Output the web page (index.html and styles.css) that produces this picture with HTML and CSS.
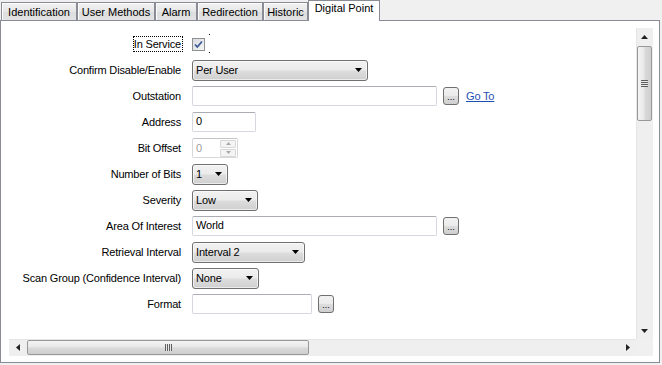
FILE: index.html
```html
<!DOCTYPE html>
<html>
<head>
<meta charset="utf-8">
<link rel="stylesheet" href="styles.css">
</head>
<body>
<div class="window">
  <div class="tabs">
    <div class="tab t1">Identification</div>
    <div class="tab t2">User Methods</div>
    <div class="tab t3">Alarm</div>
    <div class="tab t4">Redirection</div>
    <div class="tab t5">Historic</div>
    <div class="tab sel">Digital Point</div>
  </div>
  <div class="panel">
    <div class="scroller">
      <div class="viewport">
        <div class="form">
          <div class="lbl"><span class="focus">In Service</span></div>
          <div class="ctl"><span class="chkwrap"><span class="check"><svg width="11" height="11" viewBox="0 0 11 11"><path d="M2 5.5 L4.3 8 L9 2.5" fill="none" stroke="#3c5a98" stroke-width="1.8"/></svg></span></span></div>

          <div class="lbl">Confirm Disable/Enable</div>
          <div class="ctl"><div class="combo w-confirm"><span>Per User</span><svg class="arrow" width="7" height="4" viewBox="0 0 7 4"><path d="M0 0h7l-3.5 4z" fill="#000"/></svg></div></div>

          <div class="lbl">Outstation</div>
          <div class="ctl"><div class="text w-long"></div><div class="dots">...</div><span class="link">Go To</span></div>

          <div class="lbl">Address</div>
          <div class="ctl"><div class="text w-addr">0</div></div>

          <div class="lbl">Bit Offset</div>
          <div class="ctl"><div class="spin"><span class="spinval">0</span><span class="spinbtns"><span class="sb"><svg width="5" height="3" viewBox="0 0 5 3"><path d="M0 3h5L2.5 0z" fill="#a8a8a8"/></svg></span><span class="sb"><svg width="5" height="3" viewBox="0 0 5 3"><path d="M0 0h5L2.5 3z" fill="#a8a8a8"/></svg></span></span></div></div>

          <div class="lbl">Number of Bits</div>
          <div class="ctl"><div class="combo w-bits"><span>1</span><svg class="arrow" width="7" height="4" viewBox="0 0 7 4"><path d="M0 0h7l-3.5 4z" fill="#000"/></svg></div></div>

          <div class="lbl">Severity</div>
          <div class="ctl"><div class="combo w-sev"><span>Low</span><svg class="arrow" width="7" height="4" viewBox="0 0 7 4"><path d="M0 0h7l-3.5 4z" fill="#000"/></svg></div></div>

          <div class="lbl">Area Of Interest</div>
          <div class="ctl"><div class="text w-long">World</div><div class="dots">...</div></div>

          <div class="lbl">Retrieval Interval</div>
          <div class="ctl"><div class="combo w-ret"><span>Interval 2</span><svg class="arrow" width="7" height="4" viewBox="0 0 7 4"><path d="M0 0h7l-3.5 4z" fill="#000"/></svg></div></div>

          <div class="lbl">Scan Group (Confidence Interval)</div>
          <div class="ctl"><div class="combo w-scan"><span>None</span><svg class="arrow" width="7" height="4" viewBox="0 0 7 4"><path d="M0 0h7l-3.5 4z" fill="#000"/></svg></div></div>

          <div class="lbl">Format</div>
          <div class="ctl"><div class="text w-fmt"></div><div class="dots">...</div></div>
        </div>
      </div>
      <div class="vscroll">
        <div class="sbtn"><svg width="7" height="4" viewBox="0 0 7 4"><path d="M0 4h7L3.5 0z" fill="#222"/></svg></div>
        <div class="vthumb"><span class="grip-h"></span></div>
        <div class="fill"></div>
        <div class="sbtn"><svg width="7" height="4" viewBox="0 0 7 4"><path d="M0 0h7L3.5 4z" fill="#222"/></svg></div>
      </div>
      <div class="hscroll">
        <div class="sbtn"><svg width="4" height="7" viewBox="0 0 4 7"><path d="M4 0v7L0 3.5z" fill="#222"/></svg></div>
        <div class="hthumb"><span class="grip-v"></span></div>
        <div class="fill"></div>
        <div class="sbtn"><svg width="4" height="7" viewBox="0 0 4 7"><path d="M0 0v7L4 3.5z" fill="#222"/></svg></div>
      </div>
      <div class="corner"></div>
    </div>
  </div>
</div>
</body>
</html>
```
FILE: styles.css
```css
html, body {
  margin: 0;
  padding: 0;
  background: #f0f0f0;
}
body {
  font-family: "Liberation Sans", Arial, sans-serif;
  font-size: 11px;
  color: #000;
}
.window {
  width: 660px;
}
.tabs {
  display: flex;
  align-items: flex-end;
  height: 20px;
  padding-left: 1px;
  position: relative;
  z-index: 1;
}
.tab {
  box-sizing: border-box;
  height: 18px;
  border: 1px solid #898c95;
  border-bottom: none;
  background: linear-gradient(#f3f3f3, #e6e6e6 50%, #dcdcdc 51%, #e3e3e3);
  box-shadow: inset 1px 1px 0 #fcfcfc;
  text-align: center;
  line-height: 16px;
  padding-top: 1px;
  white-space: nowrap;
}
.t1 { width: 76px; }
.t2 { width: 78px; }
.t3 { width: 42px; }
.t4 { width: 66px; }
.t5 { width: 45px; }
.sel {
  width: 72px;
  height: 21px;
  margin-bottom: -1px;
  background: #fff;
  box-shadow: none;
  line-height: 14px;
  padding-top: 0;
}
.panel {
  box-sizing: border-box;
  width: 660px;
  height: 343px;
  border: 1px solid #898c95;
  background: #fff;
  padding: 7px 6px 6px 8px;
}
.scroller {
  display: grid;
  grid-template-columns: 627px 17px;
  grid-template-rows: 311px 17px;
}
.viewport {
  overflow: hidden;
  background: #fff;
}
.form {
  display: grid;
  grid-template-columns: 172px 420px;
  grid-auto-rows: 26px;
  column-gap: 11px;
  align-items: center;
  padding-top: 3px;
  letter-spacing: -0.17px;
}
.lbl {
  text-align: right;
  white-space: nowrap;
}
.focus {
  display: inline-block;
  border: 1px dotted #000;
  padding: 1px 1px 1px 0;
  margin-right: -2px;
  line-height: 12px;
}
.ctl {
  display: flex;
  align-items: center;
}
.chkwrap {
  position: relative;
  display: inline-block;
  height: 13px;
}
.chkwrap::before,
.chkwrap::after {
  content: "";
  position: absolute;
  left: 17px;
  width: 1px;
  height: 1px;
  background: #000;
}
.chkwrap::before { top: -4px; }
.chkwrap::after { top: 14px; }
.check {
  box-sizing: border-box;
  display: flex;
  align-items: center;
  justify-content: center;
  width: 13px;
  height: 13px;
  border: 1px solid #8e8f8f;
  background: linear-gradient(135deg, #d8dbe0, #f6f6f6);
}
.combo {
  box-sizing: border-box;
  height: 21px;
  border: 1px solid #707070;
  border-radius: 3px;
  background: linear-gradient(#f2f2f2, #ebebeb 48%, #dddddd 52%, #cfcfcf);
  display: flex;
  align-items: center;
  justify-content: space-between;
  padding: 0 5px 0 3px;
  box-shadow: inset 0 0 0 1px rgba(255,255,255,0.6);
}
.arrow { flex: none; }
.w-confirm { width: 176px; }
.w-bits { width: 36px; }
.w-sev { width: 66px; }
.w-ret { width: 113px; }
.w-scan { width: 67px; }
.text {
  box-sizing: border-box;
  height: 20px;
  border: 1px solid #d5d8de;
  border-top-color: #abadb3;
  border-radius: 2px;
  background: #fff;
  padding: 0 3px;
  line-height: 17px;
}
.w-long { width: 245px; }
.w-addr { width: 64px; }
.w-fmt { width: 120px; }
.dots {
  box-sizing: border-box;
  width: 16px;
  height: 18px;
  margin-left: 6px;
  border: 1px solid #707070;
  border-radius: 3px;
  background: linear-gradient(#f2f2f2, #ebebeb 48%, #dddddd 52%, #cfcfcf);
  font-size: 9px;
  line-height: 18px;
  text-align: center;
  letter-spacing: 0;
}
.link {
  margin-left: 7px;
  color: #1e4fb4;
  text-decoration: underline;
}
.spin {
  box-sizing: border-box;
  width: 46px;
  height: 20px;
  border: 1px solid #d6d8dc;
  border-top-color: #c2c4c8;
  border-radius: 2px;
  display: flex;
  align-items: center;
  justify-content: space-between;
  padding: 0 1px 0 3px;
}
.spinval { color: #a0a0a0; }
.spinbtns {
  display: flex;
  flex-direction: column;
  gap: 1px;
}
.sb {
  box-sizing: border-box;
  width: 16px;
  height: 8px;
  border: 1px solid #d8d8d8;
  border-radius: 1px;
  background: #f4f4f4;
  display: flex;
  align-items: center;
  justify-content: center;
}
.vscroll {
  display: flex;
  flex-direction: column;
  background: #efefef;
  box-shadow: inset 1px 0 0 #e6e6e6;
}
.hscroll {
  display: flex;
  background: #efefef;
  box-shadow: inset 0 1px 0 #e6e6e6;
}
.corner {
  background: #f0f0f0;
}
.sbtn {
  flex: none;
  width: 17px;
  height: 17px;
  display: flex;
  align-items: center;
  justify-content: center;
}
.fill { flex: 1; }
.vthumb {
  box-sizing: border-box;
  flex: none;
  width: 15px;
  height: 75px;
  margin: 1px 0 0 1px;
  border: 1px solid #989898;
  border-radius: 2px;
  background: linear-gradient(90deg, #f4f4f4, #e8e8e8 45%, #d9d9d9 55%, #cfcfcf);
  display: flex;
  align-items: center;
  justify-content: center;
}
.grip-h {
  width: 7px;
  height: 7px;
  background: repeating-linear-gradient(#5e5e5e 0 1px, #e8e8e8 1px 2px);
}
.hthumb {
  box-sizing: border-box;
  flex: none;
  width: 282px;
  height: 15px;
  margin: 1px 0 0 1px;
  border: 1px solid #989898;
  border-radius: 2px;
  background: linear-gradient(#f4f4f4, #e8e8e8 45%, #d9d9d9 55%, #cfcfcf);
  display: flex;
  align-items: center;
  justify-content: center;
}
.grip-v {
  width: 7px;
  height: 7px;
  background: repeating-linear-gradient(90deg, #5e5e5e 0 1px, #e8e8e8 1px 2px);
}
```
